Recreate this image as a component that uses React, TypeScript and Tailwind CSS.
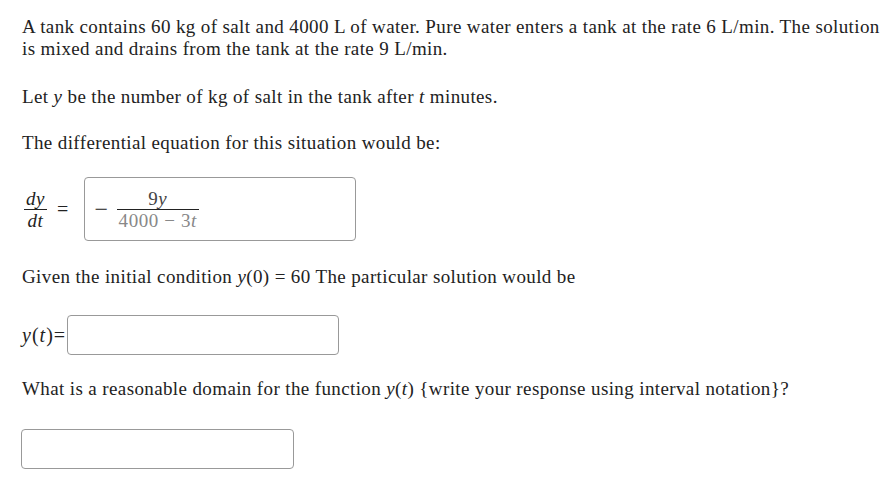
const serif = { fontFamily: '"Liberation Serif", "Times New Roman", serif' };

function Frac({ num, den, className = "" }: { num: React.ReactNode; den: React.ReactNode; className?: string }) {
  return (
    <span className={`inline-flex flex-col items-center align-middle ${className}`} style={serif}>
      <span className="px-[2px] leading-[21px]">{num}</span>
      <span className="w-full border-t border-[#222]" />
      <span className="px-[2px] leading-[21px]">{den}</span>
    </span>
  );
}

const I = ({ children }: { children: React.ReactNode }) => <i className="italic">{children}</i>;

export default function App() {
  return (
    <div
      className="min-h-[479px] w-[892px] bg-white text-[19px] leading-[22px] tracking-[0.38px] text-[#222] pl-[22px] pt-[16px]"
      style={serif}
    >
      <p className="whitespace-nowrap">
        A tank contains 60 kg of salt and 4000 L of water. Pure water enters a tank at the rate 6 L/min. The solution
        <br />
        is mixed and drains from the tank at the rate 9 L/min.
      </p>

      <p className="mt-[26px]">
        Let <I>y</I> be the number of kg of salt in the tank after <I>t</I> minutes.
      </p>

      <p className="mt-[24px]">The differential equation for this situation would be:</p>

      {/* dy/dt = [answer box] */}
      <div className="mt-[23px] flex items-center">
        <Frac num={<I>dy</I>} den={<I>dt</I>} className="ml-[2px] text-[19px] tracking-[0.5px]" />
        <span className="ml-[10px] text-[20px]">=</span>
        <div className="ml-[15px] flex h-[64px] w-[272px] items-center rounded-[4px] border border-[#999] pl-[10px]">
          <span className="text-[24px] leading-none">−</span>
          <Frac
            className="ml-[8px] text-[19px] tracking-[0.6px]"
            num={
              <span className="text-[#444]">
                9<I>y</I>
              </span>
            }
            den={
              <span className="text-[#888]">
                4000 − 3<I>t</I>
              </span>
            }
          />
        </div>
      </div>

      <p className="mt-[25px]">
        Given the initial condition <I>y</I>(0) = 60 The particular solution would be
      </p>

      <div className="mt-[27px] flex items-center">
        <span className="text-[20px] tracking-[1px]">
          <I>y</I>(<I>t</I>)=
        </span>
        <div className="ml-[1px] h-[40px] w-[272px] rounded-[4px] border border-[#999]" />
      </div>

      <p className="mt-[23px]">
        What is a reasonable domain for the function <I>y</I>(<I>t</I>) {"{"}write your response using interval notation{"}"}?
      </p>

      <div className="mt-[29px] ml-[-1px] h-[40px] w-[273px] rounded-[4px] border border-[#999]" />
    </div>
  );
}
